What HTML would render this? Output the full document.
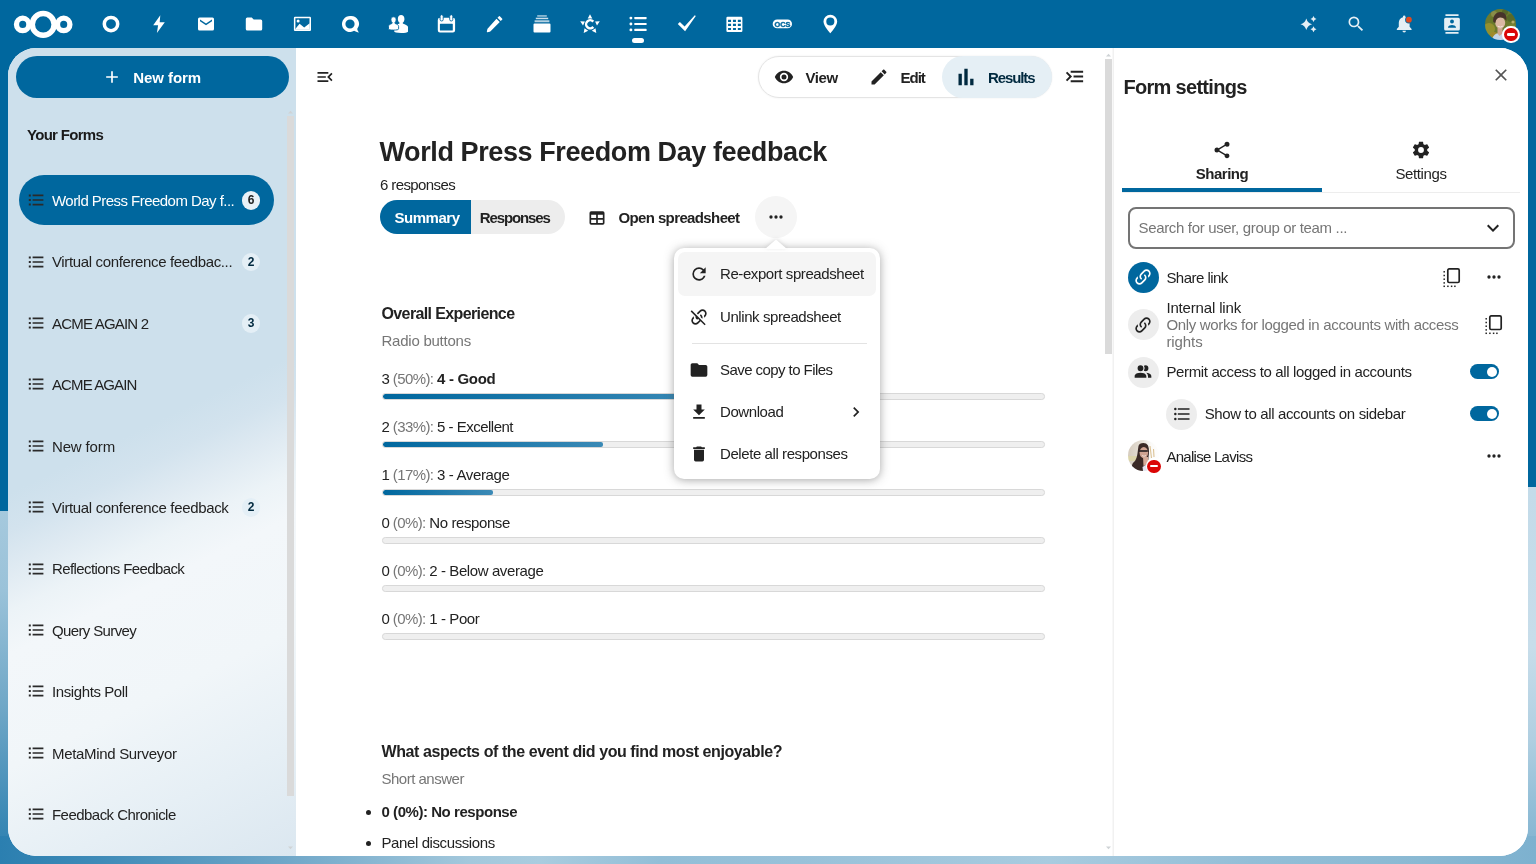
<!DOCTYPE html>
<html lang="en">
<head>
<meta charset="utf-8">
<title>Forms - Nextcloud</title>
<style>
*{box-sizing:border-box;margin:0;padding:0}
html,body{width:1536px;height:864px;overflow:hidden}
body{font-family:"Liberation Sans",sans-serif;font-size:15px;color:#222;position:relative;
 background:#00679e;}
#bg{position:absolute;left:0;top:0;width:1536px;height:864px;background:#00679e}
#bgl{position:absolute;left:0;top:511px;width:30px;height:353px;background:linear-gradient(to bottom,#a6c9dd 0,#9ac2d9 80px,#6ea6c6 200px,#3a88b5 310px,#2b7fb0 353px)}
#bgr{position:absolute;left:1506px;top:487px;width:30px;height:377px;background:linear-gradient(to bottom,#c3dbe9 0,#c7ddea 160px,#b0cfe1 252px,#95c0d8 312px,#86b6d2 352px,#7cb0ce 377px)}
#bgb{position:absolute;left:0;top:836px;width:1536px;height:28px;background:linear-gradient(to right,#2b7fb0 0,#3f8bb8 100px,#6ea6c8 280px,#a3c8dc 470px,#a9ccdf 540px,#92bed7 660px,#98c1d9 800px,#a8cbdf 1050px,#93bed7 1250px,#8ab9d3 1420px,#7db1cf 1536px)}
svg{display:block}
.abs{position:absolute}
/* header */
#header{will-change:transform;position:absolute;left:0;top:0;width:1536px;height:48px;background:#00679e}
.hicon{position:absolute;top:14px;width:20px;height:20px;fill:#fff}
/* content frame */
#content{will-change:transform;position:absolute;left:8px;top:48px;width:1520px;height:808px;border-radius:28px;overflow:hidden;background:#fff}
#nav{position:absolute;left:0;top:0;width:288px;height:808px;
 background:linear-gradient(154deg,#cde0ec 0%,#cde0ec 47%,#d3e3ee 51%,#dfeaf2 55%,#ecf3f7 59.500%,#f3f7fa 64%,#f1f6f9 76%,#e6eff5 88%,#dbe7f0 100%)}
#main{position:absolute;left:288px;top:0;width:817px;height:808px;background:#fff;overflow:hidden}
#side{position:absolute;left:1105px;top:0;width:415px;height:808px;background:#fff;border-left:1px solid #f1f1f1;box-shadow:-1px 0 0 #f8f8f8}

.newbtn{position:absolute;left:7.500px;top:8px;width:273px;height:42px;border-radius:21px;background:#00679e}
.nitem{position:absolute;left:11px;width:255px;height:50px;border-radius:25px;color:#222}
.nitem.act{background:#00679e;color:#fff}
.nicon{position:absolute;left:8.700px;top:17.200px;width:16px;height:16px;fill:#2a2a2a}
.ntext{position:absolute;left:33px;top:0;line-height:52px;white-space:nowrap;letter-spacing:-.32px}
.nbadge{position:absolute;left:222.800px;top:16.400px;width:18.600px;height:18.600px;border-radius:9.300px;background:#e4eff6;color:#00293f;font-size:12px;font-weight:700;line-height:19.600px;text-align:center}
.act .nbadge{background:#e9f1f7;color:#222}

.tb{top:8.700px;line-height:42px;font-weight:700;letter-spacing:-.45px;color:#222;white-space:nowrap}
.q{font-size:16px;font-weight:700;line-height:22px;margin-top:1.200px;color:#222;white-space:nowrap}
.sub{line-height:20px;color:#767676;letter-spacing:-.24px;margin-top:1px;white-space:nowrap}
.row{line-height:20px;white-space:nowrap;letter-spacing:-.6px;margin-top:1px;color:#222}
.row .g{color:#767676}
.row b{letter-spacing:-.3px}.row u{text-decoration:none;letter-spacing:-.4px}
.bar{width:663px;height:6.500px;margin-top:.35px;border-radius:3.250px;background:#efefef;border:1px solid #d8d8d8;overflow:hidden}
.bar i{display:block;height:4.500px;border-radius:2px;background:linear-gradient(to right,#00679e,#3b8ab6)}
.dot{width:5px;height:5px;border-radius:50%;background:#222}

.mi{left:393px;width:20px;height:20px;fill:#222}
.mt{left:424px;margin-top:.8px;line-height:20px;letter-spacing:-.42px;color:#222;white-space:nowrap}
</style>
</head>
<body>
<div id="bg"></div><div id="bgl"></div><div id="bgr"></div><div id="bgb"></div>
<div id="header">
<svg class="abs" style="left:0;top:0" width="96" height="48" viewBox="0 0 96 48">
  <g fill="none" stroke="#fff">
    <circle cx="22.7" cy="24.4" r="6.2" stroke-width="5.3"/><circle cx="63.7" cy="24.4" r="6.2" stroke-width="5.3"/><circle cx="43.2" cy="24.45" r="10.9" stroke-width="5.5"/>
  </g>
</svg>
<!-- dashboard -->
<svg class="hicon" style="left:100.500px" viewBox="0 0 20 20"><circle cx="10" cy="10.100" r="6.700" fill="none" stroke="#fff" stroke-width="3.500"/></svg>
<!-- activity -->
<svg class="hicon" style="left:148.600px" viewBox="0 0 20 20"><path d="M11.300 1.200 L4.200 11.300 H9.100 L7.900 18.900 L15.800 8.300 H10.700 Z"/></svg>
<!-- mail -->
<svg class="hicon" style="left:196.450px" viewBox="0 0 20 20"><path d="M3.5 3.5h13a1.5 1.5 0 0 1 1.500 1.500v10a1.500 1.500 0 0 1-1.500 1.500h-13a1.500 1.500 0 0 1-1.500-1.500v-10a1.500 1.500 0 0 1 1.500-1.500zM4 5.600v1.700l6 4 6-4v-1.700l-6 4z" fill-rule="evenodd"/></svg>
<!-- files -->
<svg class="hicon" style="left:244.450px" viewBox="0 0 20 20"><path d="M3.300 3.500h4.400l2 2h7a1.500 1.500 0 0 1 1.500 1.500v8a1.500 1.500 0 0 1-1.500 1.500h-13.400a1.500 1.500 0 0 1-1.500-1.500v-10a1.500 1.500 0 0 1 1.500-1.500z"/></svg>
<!-- photos -->
<svg class="hicon" style="left:292px" viewBox="0 0 20 20"><rect x="2.650" y="3.500" width="15.600" height="12.800" rx=".4" fill="none" stroke="#fff" stroke-width="1.500"/><path d="M3.300 15.700V14.900L7.600 9.800L12.200 13.500L17.700 9.200V15.700z"/><circle cx="6.100" cy="7.100" r="1.500"/></svg>
<!-- talk -->
<svg class="hicon" style="left:340px" viewBox="0 0 20 20"><path fill-rule="evenodd" d="M10 2a8 8 0 1 0 4.100 14.870c1.300.900 3 1.500 4.800 1.600-.9-1-1.500-2.200-1.700-3.500a8 8 0 0 0-7.200-12.970zM10 5.400a4.600 4.600 0 1 1 0 9.200 4.600 4.600 0 0 1 0-9.200z"/></svg>
<!-- contacts -->
<svg class="hicon" style="left:388px" viewBox="0 0 20 20"><path d="M13.050 1c2 0 3.400 1.700 3.400 3.900 0 1.500-.6 2.800-1.500 3.600-.4.400-.2 1 .3 1.200 2 .8 4.900 1.500 4.900 3.900v3.700c0 1-2.500 1.700-7 1.700s-7-.7-7-1.700v-3.700c0-2.400 2.900-3.100 4.900-3.900.5-.2.700-.8.300-1.200-.9-.8-1.500-2.100-1.500-3.600 0-2.200 1.300-3.900 3.200-3.900z"/><path d="M5.500 2.800c1.500 0 2.700 1.300 2.700 3 0 1.100-.5 2.100-1.200 2.700-.3.300-.2.800.2 1 1.500.6 3.400 1.200 3.400 3v2.400c0 .8-2 1.200-5.100 1.200s-5-.4-5-1.200v-2.400c0-1.800 1.900-2.400 3.400-3 .4-.2.500-.7.200-1-.7-.6-1.200-1.600-1.200-2.700 0-1.700 1.100-3 2.600-3z" stroke="#00679e" stroke-width=".9"/></svg>
<!-- calendar -->
<svg class="hicon" style="left:436px" viewBox="0 0 20 20"><path fill-rule="evenodd" d="M4 3.850h12.900a2.200 2.200 0 0 1 2.200 2.200v10.150a2.200 2.200 0 0 1-2.200 2.200h-12.900a2.200 2.200 0 0 1-2.200-2.200v-10.150a2.200 2.200 0 0 1 2.200-2.200zM4.400 9.800a.5.500 0 0 0-.5.500v5.600a.5.500 0 0 0 .5.500h11.900a.5.500 0 0 0 .5-.500v-5.600a.5.500 0 0 0-.5-.500z"/><rect x="4.100" y=".7" width="3.100" height="6.300" rx="1.550" stroke="#00679e" stroke-width=".9"/><rect x="13.700" y=".7" width="3.100" height="6.300" rx="1.550" stroke="#00679e" stroke-width=".9"/></svg>
<!-- notes -->
<svg class="hicon" style="left:484px" viewBox="0 0 20 20"><path d="M15 2.300a.6.600 0 0 1 .85 0l2.400 2.400a.6.600 0 0 1 0 .85l-1.500 1.500-3.250-3.250zM12.500 4.800l3.250 3.250-9.200 9.200c-.2.200-.5.400-.8.500l-2.200.5a.6.600 0 0 1-.7-.7l.5-2.200c.1-.3.200-.6.400-.8z"/></svg>
<!-- deck -->
<svg class="hicon" style="left:532px" viewBox="0 0 20 20"><path d="M5.200 1.300h9.600v1.300h-9.600z" opacity=".75"/><path d="M3.800 3.700h12.400v1.500h-12.400z" opacity=".8"/><path d="M2.600 6.200h14.800v2h-14.800z" opacity=".7"/><path d="M2.500 9.600h15a1 1 0 0 1 1 1v7a1 1 0 0 1-1 1h-15a1 1 0 0 1-1-1v-7a1 1 0 0 1 1-1z"/></svg>
<!-- collectives -->
<svg class="hicon" style="left:580px" viewBox="0 0 20 20"><path d="M10 .3l2.300 4.200h-4.600zM.2 7.200l4.700.2-1.900 4zM19.800 7.200l-2.800 4.200-1.900-4zM3.700 19l.8-4.700 3.700 2.500zM16.300 19l-4.500-2.200 3.700-2.500z"/><path fill-rule="evenodd" d="M10.200 5a5.300 5.300 0 0 1 4 1.800l-1.900 1.700a2.800 2.800 0 1 0 0 3.600l1.900 1.700a5.300 5.300 0 1 1-4-8.800z"/></svg>
<!-- forms -->
<svg class="hicon" style="left:628px" viewBox="0 0 20 20"><circle cx="2.900" cy="4.100" r="1.450"/><circle cx="2.900" cy="10" r="1.450"/><circle cx="2.900" cy="15.900" r="1.450"/><rect x="6.300" y="3" width="12.300" height="2.200" rx=".6"/><rect x="6.300" y="8.900" width="12.300" height="2.200" rx=".6"/><rect x="6.300" y="14.800" width="12.300" height="2.200" rx=".6"/></svg>
<div class="abs" style="left:632.300px;top:37.600px;width:12.100px;height:5px;border-radius:2.500px;background:#fff"></div>
<!-- tasks -->
<svg class="hicon" style="left:676px" viewBox="0 0 20 20"><path d="M1.800 9.900L9.100 17.200L19.800 1.900L18.800 1.300L8.600 12.400L3.900 7.900z"/></svg>
<!-- tables -->
<svg class="hicon" style="left:724px" viewBox="0 0 20 20"><path fill-rule="evenodd" d="M3.600 2.750h13.600a1.200 1.200 0 0 1 1.200 1.200v12.850a1.200 1.200 0 0 1-1.200 1.200h-13.600a1.200 1.200 0 0 1-1.200-1.200v-12.850a1.200 1.200 0 0 1 1.200-1.200zM4.05 5.85h3v2.200h-3zM4.05 9.85h3v2.200h-3zM4.05 13.90h3v2.200h-3zM8.95 5.85h3v2.200h-3zM8.95 9.85h3v2.200h-3zM8.95 13.90h3v2.200h-3zM13.85 5.85h3v2.200h-3zM13.85 9.85h3v2.200h-3zM13.85 13.90h3v2.200h-3z"/></svg>
<!-- ocs -->
<svg class="hicon" style="left:772px;overflow:visible" viewBox="0 0 20 20"><rect x=".7" y="5.500" width="19.300" height="8.800" rx="4.400" /><text x="10.400" y="12.600" font-family="Liberation Sans" font-weight="700" font-size="7.400" text-anchor="middle" fill="#00679e" stroke="#00679e" stroke-width=".35" letter-spacing="-.15">OCS</text></svg>
<!-- maps -->
<svg class="hicon" style="left:820px" viewBox="0 0 20 20"><path fill-rule="evenodd" d="M10.330 .650a6.850 6.850 0 0 1 6.850 6.850c0 4.600-6.850 11.700-6.850 11.700s-6.850-7.100-6.850-11.700a6.850 6.850 0 0 1 6.850-6.850zM10.330 3.500a4.050 4.050 0 1 0 0 8.100 4.050 4.050 0 0 0 0-8.100z"/></svg>

<!-- right side -->
<svg class="hicon" style="left:1298px;fill:#e5eff5" viewBox="0 0 20 20"><path d="M8.30 4.50Q9.58 9.02 14.10 10.30Q9.58 11.58 8.30 16.10Q7.02 11.58 2.50 10.30Q7.02 9.02 8.30 4.50zM15.50 2.00Q16.16 4.34 18.50 5.00Q16.16 5.66 15.50 8.00Q14.84 5.66 12.50 5.00Q14.84 4.34 15.50 2.00zM15.50 12.20Q16.16 14.54 18.50 15.20Q16.16 15.86 15.50 18.20Q14.84 15.86 12.50 15.20Q14.84 14.54 15.50 12.20z"/></svg>
<svg class="hicon" style="left:1346px;fill:#e5eff5" viewBox="0 0 24 24"><path d="M9.500,3A6.500,6.500 0 0,1 16,9.500C16,11.110 15.410,12.590 14.440,13.730L14.710,14H15.500L20.500,19L19,20.500L14,15.500V14.710L13.730,14.440C12.590,15.410 11.110,16 9.500,16A6.500,6.500 0 0,1 3,9.500A6.500,6.500 0 0,1 9.500,3M9.500,5C7,5 5,7 5,9.500C5,12 7,14 9.500,14C12,14 14,12 14,9.500C14,7 12,5 9.500,5Z"/></svg>
<svg class="hicon" style="left:1394px;fill:#e5eff5" viewBox="0 0 20 20"><g transform="translate(-.2,-.3) scale(1.040)"><path d="M10 1.800a1.200 1.200 0 0 1 1.200 1.200v.4c2.600.600 4 2.800 4 5.400v3.800l1.900 2v1h-14.200v-1l1.900-2v-3.800c0-2.600 1.400-4.800 4-5.400v-.400a1.200 1.200 0 0 1 1.200-1.200zM8.300 16.400h3.400a1.700 1.700 0 0 1-3.400 0z"/></g><circle cx="14.900" cy="5.700" r="3.800" fill="#00679e"/><circle cx="14.900" cy="5.700" r="2.900" fill="#e2491f"/></svg>
<svg class="hicon" style="left:1442.400px;fill:#e5eff5" viewBox="0 0 20 20"><path fill-rule="evenodd" d="M3.450 .3h13.100v1.650h-13.100zM3.450 18.050h13.100v1.650h-13.100zM3.650 3.800h12.700a1.500 1.500 0 0 1 1.500 1.500v9.600a1.500 1.500 0 0 1-1.500 1.500h-12.700a1.500 1.500 0 0 1-1.500-1.500v-9.600a1.500 1.500 0 0 1 1.500-1.500zM10 5.600a1.950 1.950 0 1 0 0 3.900 1.950 1.950 0 0 0 0-3.900zM6.050 13.700h7.900v-.5c0-1.500-2.600-2.300-3.950-2.300s-3.950.8-3.950 2.300z"/></svg>
<!-- avatar -->
<svg class="abs" style="left:1484.800px;top:8.500px" width="31" height="31" viewBox="0 0 31 31">
 <defs><clipPath id="c1"><circle cx="15.500" cy="15.500" r="15.500"/></clipPath><filter id="b1" x="-20%" y="-20%" width="140%" height="140%"><feGaussianBlur stdDeviation=".55"/></filter></defs>
 <g clip-path="url(#c1)"><g filter="url(#b1)">
  <rect x="-2" y="-2" width="35" height="35" fill="#6c7a2e"/>
  <circle cx="4" cy="20" r="6" fill="#93902f"/><circle cx="9" cy="27" r="4" fill="#a08a2c"/><circle cx="26" cy="9" r="4" fill="#596b2a"/><circle cx="27" cy="19" r="4" fill="#7a8434"/><circle cx="9" cy="5" r="3" fill="#8a8d48"/><circle cx="20" cy="3" r="3" fill="#55662a"/><circle cx="28" cy="13" r="1.600" fill="#b5ab6a"/><circle cx="8" cy="11" r="3" fill="#66782c"/>
  <path d="M7 31 C8 26 11 24.500 14 24 L20 21.500 C23 23 24 27 24 31z" fill="#c4d5e8"/>
  <path d="M12.500 19 h5 v5.500 l-3 2.500 l-2-2.500z" fill="#cfa58e"/>
  <ellipse cx="15.200" cy="13.800" rx="5" ry="5.900" fill="#dab8a3"/>
  <path d="M8.300 13 C7.500 6.500 11.500 2.800 15.500 3 C20 3 22.500 7 21.300 12 C20 9.300 17.500 8.300 14.800 8.600 C12.300 8.900 11 10.500 10.300 14z" fill="#46332a"/>
  <path d="M12.800 17.200 q2.500 1.800 5 0" stroke="#f3e6e0" stroke-width="1" fill="none"/>
 </g></g>
</svg>
<div class="abs" style="left:1502.300px;top:25.800px;width:17.600px;height:17.600px;border-radius:50%;background:#fff"></div>
<div class="abs" style="left:1504.300px;top:27.800px;width:13.600px;height:13.600px;border-radius:50%;background:#db0606"></div>
<div class="abs" style="left:1507.200px;top:33.400px;width:7.800px;height:2.500px;border-radius:1.250px;background:#fff"></div>
</div>
<div id="content">
  <div id="nav">
<div class="newbtn"><svg viewBox="0 0 24 24" width="20" height="20" style="position:absolute;left:86px;top:11px;fill:#fff"><path d="M19,13H13V19H11V13H5V11H11V5H13V11H19V13Z"/></svg><span style="position:absolute;left:117.800px;top:.6px;line-height:42px;font-weight:700;color:#fff;letter-spacing:-.08px">New form</span></div>
<div class="abs" style="left:19px;top:77.300px;font-weight:700;line-height:20px;color:#1a1a1a;letter-spacing:-.7px">Your Forms</div>
<div class="nitem act" style="top:127.0px"><svg class="nicon" viewBox="0 0 16 16"><path d="M.8 2.400h2v2h-2zM4.600 2.600h10.800v1.600h-10.800zM.8 7h2v2h-2zM4.600 7.200h10.800v1.600h-10.800zM.8 11.600h2v2h-2zM4.600 11.800h10.800v1.600h-10.800z"/></svg><span class="ntext" style="letter-spacing:-0.54px">World Press Freedom Day f...</span><span class="nbadge">6</span></div>
<div class="nitem" style="top:188.4px"><svg class="nicon" viewBox="0 0 16 16"><path d="M.8 2.400h2v2h-2zM4.600 2.600h10.800v1.600h-10.800zM.8 7h2v2h-2zM4.600 7.200h10.800v1.600h-10.800zM.8 11.600h2v2h-2zM4.600 11.800h10.800v1.600h-10.800z"/></svg><span class="ntext" style="letter-spacing:-0.36px">Virtual conference feedbac...</span><span class="nbadge">2</span></div>
<div class="nitem" style="top:249.8px"><svg class="nicon" viewBox="0 0 16 16"><path d="M.8 2.400h2v2h-2zM4.600 2.600h10.800v1.600h-10.800zM.8 7h2v2h-2zM4.600 7.200h10.800v1.600h-10.800zM.8 11.600h2v2h-2zM4.600 11.800h10.800v1.600h-10.800z"/></svg><span class="ntext" style="letter-spacing:-0.8px">ACME AGAIN 2</span><span class="nbadge">3</span></div>
<div class="nitem" style="top:311.2px"><svg class="nicon" viewBox="0 0 16 16"><path d="M.8 2.400h2v2h-2zM4.600 2.600h10.800v1.600h-10.800zM.8 7h2v2h-2zM4.600 7.200h10.800v1.600h-10.800zM.8 11.600h2v2h-2zM4.600 11.800h10.800v1.600h-10.800z"/></svg><span class="ntext" style="letter-spacing:-0.9px">ACME AGAIN</span></div>
<div class="nitem" style="top:372.6px"><svg class="nicon" viewBox="0 0 16 16"><path d="M.8 2.400h2v2h-2zM4.600 2.600h10.800v1.600h-10.800zM.8 7h2v2h-2zM4.600 7.200h10.800v1.600h-10.800zM.8 11.600h2v2h-2zM4.600 11.800h10.800v1.600h-10.800z"/></svg><span class="ntext" style="letter-spacing:-0.15px">New form</span></div>
<div class="nitem" style="top:434.0px"><svg class="nicon" viewBox="0 0 16 16"><path d="M.8 2.400h2v2h-2zM4.600 2.600h10.800v1.600h-10.800zM.8 7h2v2h-2zM4.600 7.200h10.800v1.600h-10.800zM.8 11.600h2v2h-2zM4.600 11.800h10.800v1.600h-10.800z"/></svg><span class="ntext" style="letter-spacing:-0.34px">Virtual conference feedback</span><span class="nbadge">2</span></div>
<div class="nitem" style="top:495.4px"><svg class="nicon" viewBox="0 0 16 16"><path d="M.8 2.400h2v2h-2zM4.600 2.600h10.800v1.600h-10.800zM.8 7h2v2h-2zM4.600 7.200h10.800v1.600h-10.800zM.8 11.600h2v2h-2zM4.600 11.800h10.800v1.600h-10.800z"/></svg><span class="ntext" style="letter-spacing:-0.6px">Reflections Feedback</span></div>
<div class="nitem" style="top:556.8px"><svg class="nicon" viewBox="0 0 16 16"><path d="M.8 2.400h2v2h-2zM4.600 2.600h10.800v1.600h-10.800zM.8 7h2v2h-2zM4.600 7.200h10.800v1.600h-10.800zM.8 11.600h2v2h-2zM4.600 11.800h10.800v1.600h-10.800z"/></svg><span class="ntext" style="letter-spacing:-0.63px">Query Survey</span></div>
<div class="nitem" style="top:618.2px"><svg class="nicon" viewBox="0 0 16 16"><path d="M.8 2.400h2v2h-2zM4.600 2.600h10.800v1.600h-10.800zM.8 7h2v2h-2zM4.600 7.200h10.800v1.600h-10.800zM.8 11.600h2v2h-2zM4.600 11.800h10.800v1.600h-10.800z"/></svg><span class="ntext" style="letter-spacing:-0.4px">Insights Poll</span></div>
<div class="nitem" style="top:679.6px"><svg class="nicon" viewBox="0 0 16 16"><path d="M.8 2.400h2v2h-2zM4.600 2.600h10.800v1.600h-10.800zM.8 7h2v2h-2zM4.600 7.200h10.800v1.600h-10.800zM.8 11.600h2v2h-2zM4.600 11.800h10.800v1.600h-10.800z"/></svg><span class="ntext" style="letter-spacing:-0.32px">MetaMind Surveyor</span></div>
<div class="nitem" style="top:741.0px"><svg class="nicon" viewBox="0 0 16 16"><path d="M.8 2.400h2v2h-2zM4.600 2.600h10.800v1.600h-10.800zM.8 7h2v2h-2zM4.600 7.200h10.800v1.600h-10.800zM.8 11.600h2v2h-2zM4.600 11.800h10.800v1.600h-10.800z"/></svg><span class="ntext" style="letter-spacing:-0.54px">Feedback Chronicle</span></div>
<div class="abs" style="left:279px;top:68px;width:7px;height:680px;background:#dadada"></div><svg class="abs" style="left:279px;top:61px" width="7" height="5" viewBox="0 0 7 5"><path d="M3.500 1.800L6 4.500H1z" fill="#cfd3d6"/></svg><svg class="abs" style="left:279px;top:798px" width="7" height="5" viewBox="0 0 7 5"><path d="M3.500 3.200L6 .5H1z" fill="#cfd3d6"/></svg></div>
  <div id="main">
<!-- nav toggle -->
<svg class="abs" style="left:18.500px;top:18.700px;fill:#222" width="20" height="20" viewBox="0 0 24 24"><path d="M21,15.61L19.59,17L14.58,12L19.59,7L21,8.39L17.44,12L21,15.61M3,6H16V8H3V6M3,13V11H13V13H3M3,18V16H16V18H3Z"/></svg>
<!-- top bar pill -->
<div class="abs" style="left:462px;top:8px;width:294px;height:42px;border-radius:21px;border:1px solid #e4e4e4;box-shadow:0 0 2px rgba(0,0,0,.08)"></div>
<div class="abs" style="left:645.500px;top:8px;width:110.500px;height:42px;border-radius:21px;background:#e5eff5"></div>
<svg class="abs" style="left:478px;top:19px;fill:#222" width="20" height="20" viewBox="0 0 24 24"><path d="M12,9A3,3 0 0,0 9,12A3,3 0 0,0 12,15A3,3 0 0,0 15,12A3,3 0 0,0 12,9M12,17A5,5 0 0,1 7,12A5,5 0 0,1 12,7A5,5 0 0,1 17,12A5,5 0 0,1 12,17M12,4.500C7,4.500 2.730,7.610 1,12C2.730,16.390 7,19.500 12,19.500C17,19.500 21.270,16.390 23,12C21.270,7.610 17,4.500 12,4.500Z"/></svg>
<span class="abs tb" style="left:509.500px">View</span>
<svg class="abs" style="left:573px;top:19px;fill:#222" width="20" height="20" viewBox="0 0 24 24"><path d="M20.710,7.040C21.100,6.650 21.100,6 20.710,5.630L18.370,3.290C18,2.900 17.350,2.900 16.960,3.290L15.120,5.120L18.870,8.870M3,17.250V21H6.750L17.810,9.930L14.060,6.180L3,17.250Z"/></svg>
<span class="abs tb" style="left:604.500px;letter-spacing:-1px">Edit</span>
<svg class="abs" style="left:660px;top:19px;fill:#00293f" width="20" height="20" viewBox="0 0 24 24"><path d="M3,22V8H7V22H3M10,22V2H14V22H10M17,22V14H21V22H17Z"/></svg>
<span class="abs tb" style="left:692px;color:#00293f;letter-spacing:-1.1px">Results</span>
<svg class="abs" style="left:766.700px;top:17.200px;fill:#222;transform:scaleX(-1)" width="23" height="23" viewBox="0 0 24 24"><path d="M21,15.610L19.590,17L14.580,12L19.590,7L21,8.390L17.440,12L21,15.610M3,6H16V8H3V6M3,13V11H13V13H3M3,18V16H16V18H3Z"/></svg>

<!-- title -->
<div class="abs" style="left:83.500px;top:87.200px;font-size:27px;font-weight:700;line-height:34px;letter-spacing:-.4px;color:#222;white-space:nowrap">World Press Freedom Day feedback</div>
<div class="abs" style="left:84px;top:127px;line-height:20px;letter-spacing:-.6px;white-space:nowrap">6 responses</div>
<!-- switch -->
<div class="abs" style="left:84px;top:152px;width:91px;height:34px;border-radius:17px 0 0 17px;background:#00679e;color:#fff;font-weight:700;line-height:35px;text-align:center;letter-spacing:-.45px;padding-left:3px">Summary</div>
<div class="abs" style="left:175px;top:152px;width:93.500px;height:34px;border-radius:0 17px 17px 0;background:#ededed;color:#222;font-weight:700;line-height:34px;text-align:center;letter-spacing:-1.1px;padding-right:6px;line-height:35px">Responses</div>
<svg class="abs" style="left:291px;top:159.500px;fill:#222" width="20" height="20" viewBox="0 0 24 24"><path d="M5,4H19A2,2 0 0,1 21,6V18A2,2 0 0,1 19,20H5A2,2 0 0,1 3,18V6A2,2 0 0,1 5,4M5,8V12H11V8H5M13,8V12H19V8H13M5,14V18H11V14H5M13,14V18H19V14H13Z"/></svg>
<span class="abs" style="left:322.500px;top:152px;line-height:35px;font-weight:700;letter-spacing:-.62px;white-space:nowrap">Open spreadsheet</span>
<div class="abs" style="left:459px;top:148px;width:42px;height:42px;border-radius:21px;background:#f5f5f5"></div>
<svg class="abs" style="left:470px;top:159px;fill:#222" width="20" height="20" viewBox="0 0 24 24"><path d="M16,12A2,2 0 0,1 18,10A2,2 0 0,1 20,12A2,2 0 0,1 18,14A2,2 0 0,1 16,12M10,12A2,2 0 0,1 12,10A2,2 0 0,1 14,12A2,2 0 0,1 12,14A2,2 0 0,1 10,12M4,12A2,2 0 0,1 6,10A2,2 0 0,1 8,12A2,2 0 0,1 6,14A2,2 0 0,1 4,12Z"/></svg>

<!-- question 1 -->
<div class="abs q" style="left:85.500px;top:254px;letter-spacing:-.62px">Overall Experience</div>
<div class="abs sub" style="left:85.500px;top:282px">Radio buttons</div>
<div class="abs row" style="left:85.500px;top:320px">3 <span class="g">(50%):</span> <b>4 - Good</b></div>
<div class="abs bar" style="left:85.500px;top:345.0px"><i style="width:331px"></i></div>
<div class="abs row" style="left:85.500px;top:368px">2 <span class="g">(33%):</span> <u style="letter-spacing:-0.5px">5 - Excellent</u></div>
<div class="abs bar" style="left:85.500px;top:393.0px"><i style="width:220.7px"></i></div>
<div class="abs row" style="left:85.500px;top:416px">1 <span class="g">(17%):</span> <u style="letter-spacing:-0.36px">3 - Average</u></div>
<div class="abs bar" style="left:85.500px;top:441.0px"><i style="width:110.5px"></i></div>
<div class="abs row" style="left:85.500px;top:464px">0 <span class="g">(0%):</span> <u style="letter-spacing:-0.4px">No response</u></div>
<div class="abs bar" style="left:85.500px;top:489.0px"></div>
<div class="abs row" style="left:85.500px;top:512px">0 <span class="g">(0%):</span> <u style="letter-spacing:-0.4px">2 - Below average</u></div>
<div class="abs bar" style="left:85.500px;top:537.0px"></div>
<div class="abs row" style="left:85.500px;top:560px">0 <span class="g">(0%):</span> <u style="letter-spacing:-0.4px">1 - Poor</u></div>
<div class="abs bar" style="left:85.500px;top:585.0px"></div>

<!-- question 2 -->
<div class="abs q" style="left:85.500px;top:692px;letter-spacing:-.42px">What aspects of the event did you find most enjoyable?</div>
<div class="abs sub" style="left:85.500px;top:719.500px;letter-spacing:-.5px">Short answer</div>
<div class="abs dot" style="left:70px;top:762.300px"></div>
<div class="abs row" style="left:85.500px;top:753.300px;font-weight:700;letter-spacing:-.45px">0 (0%): No response</div>
<div class="abs dot" style="left:70px;top:792.500px"></div>
<div class="abs row" style="left:85.500px;top:783.500px;letter-spacing:-.4px">Panel discussions</div>


<!-- popup -->
<div class="abs" style="left:378px;top:200px;width:206px;height:231px;border-radius:10px;background:#fff;box-shadow:0 1px 10px rgba(77,77,77,.5)"></div>
<svg class="abs" style="left:469px;top:191px;filter:drop-shadow(0 -1px 2px rgba(77,77,77,.18))" width="22" height="10" viewBox="0 0 22 10"><path d="M0 10L11 0.500L22 10z" fill="#fff"/></svg>
<div class="abs" style="left:382px;top:204px;width:198px;height:44px;border-radius:7px;background:#f5f5f5"></div>
<svg class="abs mi" style="top:216px" viewBox="0 0 24 24"><path d="M17.650,6.350C16.200,4.900 14.210,4 12,4A8,8 0 0,0 4,12A8,8 0 0,0 12,20C15.730,20 18.840,17.450 19.730,14H17.650C16.830,16.330 14.610,18 12,18A6,6 0 0,1 6,12A6,6 0 0,1 12,6C13.660,6 15.140,6.690 16.220,7.780L13,11H20V4L17.650,6.350Z"/></svg>
<span class="abs mt" style="top:215.500px">Re-export spreadsheet</span>
<svg class="abs mi" style="top:259px" viewBox="0 0 24 24"><path d="M2,5.270L3.280,4L20,20.720L18.730,22L13.900,17.170L11.290,19.780C9.340,21.730 6.170,21.730 4.220,19.780C2.270,17.830 2.270,14.660 4.220,12.710L5.710,11.220C5.700,12.040 5.830,12.860 6.110,13.650L5.640,14.120C4.460,15.290 4.460,17.190 5.640,18.360C6.810,19.540 8.710,19.540 9.880,18.360L12.500,15.760L10.880,14.150C10.870,14.390 10.770,14.640 10.590,14.830C10.200,15.220 9.560,15.220 9.170,14.830C8.120,13.770 7.630,12.370 7.720,11L2,5.270M12.710,4.220C14.660,2.270 17.830,2.270 19.780,4.220C21.730,6.170 21.730,9.340 19.780,11.290L18.290,12.780C18.300,11.960 18.170,11.140 17.890,10.360L18.360,9.880C19.540,8.710 19.540,6.810 18.360,5.640C17.190,4.460 15.290,4.460 14.120,5.640L10.790,8.970L9.380,7.550L12.710,4.220M13.410,9.170C13.800,8.780 14.440,8.780 14.830,9.170C16.200,10.540 16.610,12.500 16.060,14.230L14.280,12.460C14.230,11.780 13.940,11.110 13.410,10.590C13,10.200 13,9.560 13.410,9.170Z"/></svg>
<span class="abs mt" style="top:258.500px">Unlink spreadsheet</span>
<div class="abs" style="left:395.500px;top:294.500px;width:175px;height:1px;background:#e3e3e3"></div>
<svg class="abs mi" style="top:312px" viewBox="0 0 24 24"><path d="M10,4H4C2.890,4 2,4.890 2,6V18A2,2 0 0,0 4,20H20A2,2 0 0,0 22,18V8C22,6.890 21.100,6 20,6H12L10,4Z"/></svg>
<span class="abs mt" style="top:311.500px;letter-spacing:-.56px">Save copy to Files</span>
<svg class="abs mi" style="top:354px" viewBox="0 0 24 24"><path d="M5,20H19V18H5M19,9H15V3H9V9H5L12,16L19,9Z"/></svg>
<span class="abs mt" style="top:353.500px">Download</span>
<svg class="abs" style="left:549.500px;top:354px;fill:#222" width="20" height="20" viewBox="0 0 24 24"><path d="M8.590,16.580L13.170,12L8.590,7.410L10,6L16,12L10,18L8.590,16.580Z"/></svg>
<svg class="abs mi" style="top:396px" viewBox="0 0 24 24"><path d="M19,4H15.500L14.500,3H9.500L8.500,4H5V6H19M6,19A2,2 0 0,0 8,21H16A2,2 0 0,0 18,19V7H6V19Z"/></svg>
<span class="abs mt" style="top:395.500px">Delete all responses</span>

<!-- main scrollbar -->
<div class="abs" style="left:809px;top:10.500px;width:7px;height:295px;background:#dadada"></div>
<svg class="abs" style="left:809px;top:4px" width="7" height="5" viewBox="0 0 7 5"><path d="M3.500 1.800L6 4.500H1z" fill="#cfd3d6"/></svg>
<svg class="abs" style="left:809px;top:798px" width="7" height="5" viewBox="0 0 7 5"><path d="M3.500 3.200L6 .5H1z" fill="#cfd3d6"/></svg>
</div>
  <div id="side">
<div class="abs" style="left:9.500px;top:26.200px;font-size:20px;font-weight:700;line-height:26px;letter-spacing:-.7px;color:#222;white-space:nowrap">Form settings</div>
<svg class="abs" style="left:377.400px;top:17px;fill:#555" width="20" height="20" viewBox="0 0 24 24"><path d="M19,6.410L17.590,5L12,10.590L6.410,5L5,6.410L10.590,12L5,17.590L6.410,19L12,13.410L17.590,19L19,17.590L13.410,12L19,6.410Z"/></svg>
<!-- tabs -->
<svg class="abs" style="left:98px;top:92px;fill:#222" width="20" height="20" viewBox="0 0 24 24"><path d="M18,16.080C17.240,16.080 16.560,16.380 16.040,16.850L8.910,12.700C8.960,12.470 9,12.240 9,12C9,11.760 8.960,11.530 8.910,11.300L15.960,7.190C16.500,7.690 17.210,8 18,8A3,3 0 0,0 21,5A3,3 0 0,0 18,2A3,3 0 0,0 15,5C15,5.240 15.040,5.470 15.090,5.700L8.040,9.810C7.500,9.310 6.790,9 6,9A3,3 0 0,0 3,12A3,3 0 0,0 6,15C6.790,15 7.500,14.690 8.040,14.190L15.160,18.340C15.110,18.550 15.080,18.770 15.080,19C15.080,20.610 16.390,21.910 18,21.910C19.610,21.910 20.920,20.610 20.920,19A2.920,2.920 0 0,0 18,16.080Z"/></svg>
<div class="abs" style="left:8px;top:115.800px;width:200px;text-align:center;font-weight:700;line-height:20px;letter-spacing:-.5px;color:#222">Sharing</div>
<svg class="abs" style="left:297px;top:92px;fill:#222" width="20" height="20" viewBox="0 0 24 24"><path d="M12,15.500A3.500,3.500 0 0,1 8.500,12A3.500,3.500 0 0,1 12,8.500A3.500,3.500 0 0,1 15.500,12A3.500,3.500 0 0,1 12,15.500M19.430,12.970C19.470,12.650 19.500,12.330 19.500,12C19.500,11.670 19.470,11.340 19.430,11L21.540,9.370C21.730,9.220 21.780,8.950 21.660,8.730L19.660,5.270C19.540,5.050 19.270,4.960 19.050,5.050L16.560,6.050C16.040,5.660 15.500,5.320 14.870,5.070L14.500,2.420C14.460,2.180 14.250,2 14,2H10C9.750,2 9.540,2.180 9.500,2.420L9.130,5.070C8.500,5.320 7.960,5.660 7.440,6.050L4.950,5.050C4.730,4.960 4.460,5.050 4.340,5.270L2.340,8.730C2.210,8.950 2.270,9.220 2.460,9.370L4.570,11C4.530,11.340 4.500,11.670 4.500,12C4.500,12.330 4.530,12.650 4.570,12.970L2.460,14.630C2.270,14.780 2.210,15.050 2.340,15.270L4.340,18.730C4.460,18.950 4.730,19.030 4.950,18.950L7.440,17.940C7.960,18.340 8.500,18.680 9.130,18.930L9.500,21.580C9.540,21.820 9.750,22 10,22H14C14.250,22 14.460,21.820 14.500,21.580L14.870,18.930C15.500,18.670 16.040,18.340 16.560,17.940L19.050,18.950C19.270,19.030 19.540,18.950 19.660,18.730L21.660,15.270C21.780,15.050 21.730,14.780 21.540,14.630L19.430,12.970Z"/></svg>
<div class="abs" style="left:207px;top:115.800px;width:200px;text-align:center;line-height:20px;letter-spacing:-.4px;color:#222">Settings</div>
<div class="abs" style="left:8px;top:143.500px;width:398px;height:1px;background:#ededed"></div>
<div class="abs" style="left:8px;top:140px;width:200px;height:3.500px;background:#00679e"></div>
<!-- search -->
<div class="abs" style="left:14px;top:158.500px;width:387px;height:42px;border-radius:8px;border:2px solid #747474;background:#fff"></div>
<div class="abs" style="left:24.500px;top:170px;line-height:20px;color:#767676;letter-spacing:-.34px;white-space:nowrap">Search for user, group or team ...</div>
<svg class="abs" style="left:367px;top:167.500px;fill:#222" width="24" height="24" viewBox="0 0 24 24"><path d="M7.410,8.580L12,13.170L16.590,8.580L18,10L12,16L6,10L7.410,8.580Z"/></svg>
<div class="abs" style="left:14.2px;top:214.2px;width:31px;height:31px;border-radius:16px;background:#00679e"></div><svg class="abs" style="left:19.4px;top:219.3px;fill:#fff" width="20" height="20" viewBox="0 0 24 24"><path d="M10.590,13.410C11,13.800 11,14.440 10.590,14.830C10.200,15.220 9.560,15.220 9.170,14.830C7.220,12.880 7.220,9.710 9.170,7.760V7.760L12.710,4.220C14.660,2.270 17.830,2.270 19.780,4.220C21.730,6.170 21.730,9.340 19.780,11.290L18.290,12.780C18.300,11.960 18.170,11.140 17.890,10.360L18.360,9.880C19.540,8.710 19.540,6.810 18.360,5.640C17.190,4.460 15.290,4.460 14.120,5.640L10.590,9.170C9.410,10.340 9.410,12.240 10.590,13.410M13.410,9.170C13.800,8.780 14.440,8.780 14.830,9.170C16.780,11.120 16.780,14.290 14.830,16.240V16.240L11.290,19.780C9.340,21.730 6.170,21.730 4.220,19.780C2.270,17.830 2.270,14.660 4.220,12.710L5.710,11.220C5.700,12.040 5.830,12.860 6.110,13.650L5.640,14.120C4.460,15.290 4.460,17.190 5.640,18.360C6.810,19.540 8.710,19.540 9.880,18.360L13.410,14.830C14.590,13.660 14.590,11.760 13.410,10.590C13,10.200 13,9.560 13.410,9.170Z"/></svg><div class="abs" style="left:52.4px;top:219.3px;margin-top:.6px;line-height:20px;letter-spacing:-0.53px;color:#222;white-space:nowrap">Share link</div><svg class="abs" style="left:327.7px;top:218.8px;overflow:visible" width="20" height="20" viewBox="0 0 20 20"><rect x="5.800" y="1.900" width="11.400" height="13.600" rx="1.300" fill="none" stroke="#222" stroke-width="1.700"/><g fill="#222"><rect x="1.45" y="4.05" width="1.500" height="1.500"/><rect x="1.45" y="7.75" width="1.500" height="1.500"/><rect x="1.45" y="11.45" width="1.500" height="1.500"/><rect x="1.45" y="15.15" width="1.500" height="1.500"/><rect x="1.45" y="18.55" width="1.500" height="1.500"/><rect x="5.15" y="18.55" width="1.500" height="1.500"/><rect x="8.85" y="18.55" width="1.500" height="1.500"/><rect x="12.15" y="18.55" width="1.500" height="1.500"/></g></svg><svg class="abs" style="left:369.5px;top:219.3px;fill:#222" width="20" height="20" viewBox="0 0 24 24"><path d="M16,12A2,2 0 0,1 18,10A2,2 0 0,1 20,12A2,2 0 0,1 18,14A2,2 0 0,1 16,12M10,12A2,2 0 0,1 12,10A2,2 0 0,1 14,12A2,2 0 0,1 12,14A2,2 0 0,1 10,12M4,12A2,2 0 0,1 6,10A2,2 0 0,1 8,12A2,2 0 0,1 6,14A2,2 0 0,1 4,12Z"/></svg><div class="abs" style="left:14.2px;top:261.4px;width:31px;height:31px;border-radius:16px;background:#ededed"></div><svg class="abs" style="left:19.4px;top:266.5px;fill:#222" width="20" height="20" viewBox="0 0 24 24"><path d="M10.590,13.410C11,13.800 11,14.440 10.590,14.830C10.200,15.220 9.560,15.220 9.170,14.830C7.220,12.880 7.220,9.710 9.170,7.760V7.760L12.710,4.220C14.660,2.270 17.830,2.270 19.780,4.220C21.730,6.170 21.730,9.340 19.780,11.290L18.290,12.780C18.300,11.960 18.170,11.140 17.890,10.360L18.360,9.880C19.540,8.710 19.540,6.810 18.360,5.640C17.190,4.460 15.290,4.460 14.120,5.640L10.590,9.170C9.410,10.340 9.410,12.240 10.590,13.410M13.410,9.170C13.800,8.780 14.440,8.780 14.830,9.170C16.780,11.120 16.780,14.290 14.830,16.240V16.240L11.290,19.780C9.340,21.730 6.170,21.730 4.220,19.780C2.270,17.830 2.270,14.660 4.220,12.710L5.710,11.220C5.700,12.040 5.830,12.860 6.110,13.650L5.640,14.120C4.460,15.290 4.460,17.190 5.640,18.360C6.810,19.540 8.710,19.540 9.880,18.360L13.410,14.830C14.590,13.660 14.590,11.760 13.410,10.590C13,10.200 13,9.560 13.410,9.170Z"/></svg><div class="abs" style="left:52.4px;top:249.40px;margin-top:.6px;line-height:20px;letter-spacing:-0.16px;color:#222;white-space:nowrap">Internal link</div><div class="abs" style="left:52.4px;top:266.90px;margin-top:.6px;line-height:20px;letter-spacing:-0.33px;color:#767676;white-space:nowrap">Only works for logged in accounts with access</div><div class="abs" style="left:52.4px;top:283.70px;margin-top:.6px;line-height:20px;letter-spacing:-0.07px;color:#767676;white-space:nowrap">rights</div><svg class="abs" style="left:369.5px;top:266px;overflow:visible" width="20" height="20" viewBox="0 0 20 20"><rect x="5.800" y="1.900" width="11.400" height="13.600" rx="1.300" fill="none" stroke="#222" stroke-width="1.700"/><g fill="#222"><rect x="1.45" y="4.05" width="1.500" height="1.500"/><rect x="1.45" y="7.75" width="1.500" height="1.500"/><rect x="1.45" y="11.45" width="1.500" height="1.500"/><rect x="1.45" y="15.15" width="1.500" height="1.500"/><rect x="1.45" y="18.55" width="1.500" height="1.500"/><rect x="5.15" y="18.55" width="1.500" height="1.500"/><rect x="8.85" y="18.55" width="1.500" height="1.500"/><rect x="12.15" y="18.55" width="1.500" height="1.500"/></g></svg><div class="abs" style="left:14.2px;top:308.7px;width:31px;height:31px;border-radius:16px;background:#ededed"></div><svg class="abs" style="left:19.4px;top:313.8px;fill:#222" width="20" height="20" viewBox="0 0 24 24"><path d="M16 17V19H2V17S2 13 9 13 16 17 16 17M12.500 7.500A3.500 3.500 0 1 0 9 11A3.500 3.500 0 0 0 12.500 7.500M15.940 13A5.320 5.320 0 0 1 18 17V19H22V17S22 13.370 15.940 13M15 4A3.390 3.390 0 0 0 13.070 4.590A5 5 0 0 1 13.070 10.410A3.390 3.390 0 0 0 15 11A3.500 3.500 0 0 0 15 4Z"/></svg><div class="abs" style="left:52.4px;top:313.8px;margin-top:.6px;line-height:20px;letter-spacing:-0.36px;color:#222;white-space:nowrap">Permit access to all logged in accounts</div><div class="abs" style="left:355.500px;top:316.1px;width:29px;height:15px;border-radius:7.500px;background:#00679e"></div><div class="abs" style="left:372.500px;top:318.6px;width:10px;height:10px;border-radius:5px;background:#fff"></div><div class="abs" style="left:52.4px;top:350.6px;width:31px;height:31px;border-radius:16px;background:#ededed"></div><svg class="abs" style="left:57.599999999999994px;top:355.7px;fill:#222" width="20" height="20" viewBox="0 0 24 24"><path d="M7,5H21V7H7V5M7,13V11H21V13H7M4,4.500A1.500,1.500 0 0,1 5.500,6A1.500,1.500 0 0,1 4,7.500A1.500,1.500 0 0,1 2.500,6A1.500,1.500 0 0,1 4,4.500M4,10.500A1.500,1.500 0 0,1 5.500,12A1.500,1.500 0 0,1 4,13.500A1.500,1.500 0 0,1 2.500,12A1.500,1.500 0 0,1 4,10.500M7,19V17H21V19H7M4,16.500A1.500,1.500 0 0,1 5.500,18A1.500,1.500 0 0,1 4,19.500A1.500,1.500 0 0,1 2.500,18A1.500,1.500 0 0,1 4,16.500Z"/></svg><div class="abs" style="left:90.7px;top:355.7px;margin-top:.6px;line-height:20px;letter-spacing:-0.36px;color:#222;white-space:nowrap">Show to all accounts on sidebar</div><div class="abs" style="left:355.500px;top:358.0px;width:29px;height:15px;border-radius:7.500px;background:#00679e"></div><div class="abs" style="left:372.500px;top:360.5px;width:10px;height:10px;border-radius:5px;background:#fff"></div><svg class="abs" style="left:14px;top:392.300px" width="31" height="31" viewBox="0 0 31 31">
 <defs><clipPath id="c2"><circle cx="15.500" cy="15.500" r="15.500"/></clipPath><filter id="b2" x="-20%" y="-20%" width="140%" height="140%"><feGaussianBlur stdDeviation=".7"/></filter>
 <linearGradient id="g2" x1="0" x2="1" y1="0" y2="0"><stop offset="0" stop-color="#d3c9bb"/><stop offset=".45" stop-color="#e6e0d6"/><stop offset=".72" stop-color="#fbfaf8"/><stop offset="1" stop-color="#fff"/></linearGradient></defs>
 <g clip-path="url(#c2)"><g filter="url(#b2)">
  <rect x="-2" y="-2" width="35" height="35" fill="url(#g2)"/>
  <rect x="0" y="16" width="9" height="5" fill="#dcd5ab"/>
  <path d="M22 6 l1.500 12 M25.500 9 l.5 8" stroke="#dcc396" stroke-width="1.100" fill="none"/>
  <path d="M10.500 6 C11 2.500 18 1.500 20 5.500 C21.500 9 21 14 20.500 17 L20 24 L22 31 L6 31 C3 28 3.500 24 6 22 C9.500 19 9.500 12 10.500 6z" fill="#3a2a26"/>
  <ellipse cx="15.800" cy="12.600" rx="4.300" ry="5.600" fill="#cfa391"/>
  <path d="M15 17 h5 l.5 7 l-5 2z" fill="#d5ab98"/>
  <rect x="10.300" y="10.100" width="9.800" height="1.800" rx=".8" fill="#2c2426" opacity=".85"/>
  <path d="M14.500 27 L20 23.500 L23 31 L15 31z" fill="#e3e6f0"/>
  <path d="M14 15.500 q2 1.500 4 0" stroke="#f0e2dc" stroke-width=".9" fill="none"/>
 </g></g>
</svg>
<div class="abs" style="left:31.900px;top:410.400px;width:16px;height:16px;border-radius:8px;background:#fff"></div>
<div class="abs" style="left:33.100px;top:411.600px;width:13.600px;height:13.600px;border-radius:6.800px;background:#db0606"></div>
<div class="abs" style="left:35.900px;top:417.300px;width:8px;height:2.200px;border-radius:1.100px;background:#fff"></div>
<div class="abs" style="left:52.4px;top:398.1px;margin-top:.6px;line-height:20px;letter-spacing:-0.72px;color:#222;white-space:nowrap">Analise Laviss</div><svg class="abs" style="left:369.5px;top:398.1px;fill:#222" width="20" height="20" viewBox="0 0 24 24"><path d="M16,12A2,2 0 0,1 18,10A2,2 0 0,1 20,12A2,2 0 0,1 18,14A2,2 0 0,1 16,12M10,12A2,2 0 0,1 12,10A2,2 0 0,1 14,12A2,2 0 0,1 12,14A2,2 0 0,1 10,12M4,12A2,2 0 0,1 6,10A2,2 0 0,1 8,12A2,2 0 0,1 6,14A2,2 0 0,1 4,12Z"/></svg></div>
</div>
</body>
</html>
